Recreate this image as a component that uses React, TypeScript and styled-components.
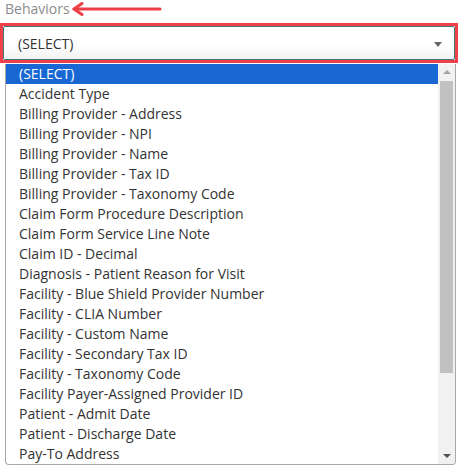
import React from 'react'
import styled, { createGlobalStyle } from 'styled-components'

const GlobalStyle = createGlobalStyle`
	body {
		margin: 0;
		background: #ffffff;
		font-family: "Open Sans", "Liberation Sans", sans-serif;
	}
`

const Page = styled.div`
	width: 458px;
	height: 466px;
	overflow: hidden;
`

const LabelRow = styled.div`
	display: flex;
	align-items: center;
	height: 20px;
	padding-left: 5px;
	margin-top: -2px;
	margin-bottom: 5px;
`

const FieldLabel = styled.span`
	font-size: 14px;
	color: #8c8c8c;
`

const ArrowMark = styled.svg`
	margin-left: 2px;
	margin-top: 1px;
`

const Highlight = styled.div`
	border: 3px solid #f0414b;
	height: 34px;
	display: flex;
`

const SelectBox = styled.div`
	flex: 1;
	display: flex;
	align-items: center;
	justify-content: space-between;
	border: 1px solid #3f7b7b;
	border-radius: 2px;
	background: linear-gradient(#ffffff 55%, #f2f2f2);
	padding: 0 12px 0 14px;
	font-size: 14px;
	color: #333333;
`

const Caret = styled.span`
	width: 0;
	height: 0;
	border-left: 4px solid transparent;
	border-right: 4px solid transparent;
	border-top: 5px solid #666666;
	margin-top: 2px;
`

const ListBox = styled.div`
	margin: 1px 0 0 5px;
	width: 451px;
	height: 401px;
	box-sizing: border-box;
	border: 1px solid #a8a8a8;
	border-top: none;
	border-radius: 0 0 4px 4px;
	display: flex;
	overflow: hidden;
	background: #ffffff;
`

const Options = styled.div`
	flex: 1;
	display: flex;
	flex-direction: column;
`

const Option = styled.div<{ $active?: boolean }>`
	height: 20px;
	line-height: 20px;
	padding-left: 13px;
	font-size: 14px;
	white-space: nowrap;
	color: ${p => (p.$active ? '#ffffff' : '#333333')};
	background: ${p => (p.$active ? '#1967d2' : 'transparent')};
`

const ScrollTrack = styled.div`
	width: 15px;
	background: #f1f1f1;
	display: flex;
	flex-direction: column;
	align-items: center;
	padding: 0 1px;
`

const ScrollButton = styled.div`
	height: 16px;
	display: flex;
	align-items: center;
	justify-content: center;
`

const ScrollTriangle = styled.span<{ $up?: boolean; $color: string }>`
	width: 0;
	height: 0;
	border-left: 4px solid transparent;
	border-right: 4px solid transparent;
	${p => (p.$up ? `border-bottom: 4px solid ${p.$color};` : `border-top: 4px solid ${p.$color};`)}
`

const ScrollThumb = styled.div`
	width: 13px;
	height: 292px;
	background: #c1c1c1;
	margin-top: 1px;
`

const Spacer = styled.div`
	flex: 1;
`

const options = [
	'(SELECT)',
	'Accident Type',
	'Billing Provider - Address',
	'Billing Provider - NPI',
	'Billing Provider - Name',
	'Billing Provider - Tax ID',
	'Billing Provider - Taxonomy Code',
	'Claim Form Procedure Description',
	'Claim Form Service Line Note',
	'Claim ID - Decimal',
	'Diagnosis - Patient Reason for Visit',
	'Facility - Blue Shield Provider Number',
	'Facility - CLIA Number',
	'Facility - Custom Name',
	'Facility - Secondary Tax ID',
	'Facility - Taxonomy Code',
	'Facility Payer-Assigned Provider ID',
	'Patient - Admit Date',
	'Patient - Discharge Date',
	'Pay-To Address',
]

const App = () => {
	return (
		<Page>
			<GlobalStyle />
			<LabelRow>
				<FieldLabel>Behaviors</FieldLabel>
				<ArrowMark width='90' height='14' viewBox='0 0 90 14'>
					<path d='M2 7 H88' stroke='#ee3f47' strokeWidth='3' strokeLinecap='round' />
					<path d='M10 1.5 L2 7 L10 12.5' stroke='#ee3f47' strokeWidth='3' fill='none' strokeLinecap='round' strokeLinejoin='round' />
				</ArrowMark>
			</LabelRow>
			<Highlight>
				<SelectBox>
					<span>(SELECT)</span>
					<Caret />
				</SelectBox>
			</Highlight>
			<ListBox>
				<Options>
					{options.map((o, i) => (
						<Option key={o} $active={i === 0}>{o}</Option>
					))}
				</Options>
				<ScrollTrack>
					<ScrollButton>
						<ScrollTriangle $up $color='#a3a3a3' />
					</ScrollButton>
					<ScrollThumb />
					<Spacer />
					<ScrollButton>
						<ScrollTriangle $color='#505050' />
					</ScrollButton>
				</ScrollTrack>
			</ListBox>
		</Page>
	)
}

export default App
